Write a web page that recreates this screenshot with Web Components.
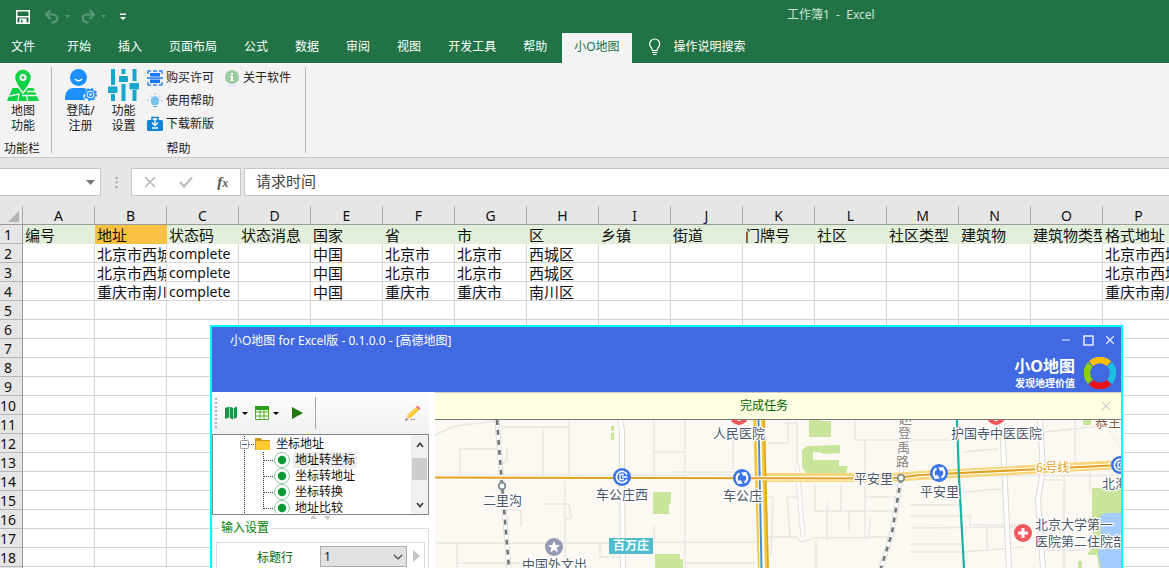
<!DOCTYPE html>
<html lang="zh-CN">
<head>
<meta charset="utf-8">
<title>工作簿1 - Excel</title>
<style>
html,body{height:100%;margin:0}
body{font:12px/16px "Noto Sans","Noto Sans CJK SC",sans-serif;color:#262626;overflow:hidden}
</style>
</head>
<body>
<xl-app></xl-app>

<template id="t-app">
<style>
:host{display:flex;flex-direction:column;height:100vh;position:relative;overflow:hidden;background:#e6e6e6}
xl-sheet{flex:1;min-height:0}
map-window{position:absolute;left:210px;right:46px;top:325px;bottom:0}
</style>
<xl-title></xl-title>
<xl-tabs></xl-tabs>
<xl-ribbon></xl-ribbon>
<xl-formula></xl-formula>
<xl-sheet></xl-sheet>
<map-window></map-window>
</template>

<template id="t-title">
<style>
:host{display:flex;align-items:center;height:33px;background:#217346;color:#cfe2d7;padding:0 12px}
.quick,.name{flex:1}
.quick{display:flex;align-items:center;height:100%}
button{border:0;background:none;padding:0;display:flex;color:#fff}
.undo{margin-left:10px}.redo{margin-left:10px}.more{margin-left:12px}
.dim{color:#589775}
.name{white-space:pre;padding:0 0 4px 405px}
</style>
<div class="quick">
<button aria-label="保存"><svg width="22" height="16" viewBox="0 0 22 16"><path d="M4 1h14v14H4zM5.500 2.500v4.500h11V2.500zM5.500 8.500v5h2v-4h7v4h2v-5zM9 11v2.500h1.500V11z" fill="#fff" fill-rule="evenodd"/></svg></button>
<button class="undo dim" aria-label="撤消"><svg width="26" height="16" viewBox="0 0 26 16"><path d="M6.500 1 2 5.500l4.500 4.500M2.500 5.500h6c7 0 6 8-1 8" fill="none" stroke="currentColor" stroke-width="2.200"/><path d="M21 6h5l-2.500 3z" fill="currentColor"/></svg></button>
<button class="redo dim" aria-label="恢复"><svg width="26" height="16" viewBox="0 0 26 16"><path d="M9.500 1 14 5.500 9.500 10M13.500 5.500h-6c-7 0-6 8 1 8" fill="none" stroke="currentColor" stroke-width="2.200"/><path d="M21 6h5l-2.500 3z" fill="currentColor"/></svg></button>
<button class="more" aria-label="自定义快速访问工具栏"><svg width="10" height="16" viewBox="0 0 10 16"><path d="M2 4.500h6v1.500H2zM2 8h6l-3 3z" fill="#fff"/></svg></button>
</div>
<div class="name">工作簿1  -  Excel</div>
</template>

<template id="t-tabs">
<style>
:host{display:block;background:#217346}
nav{display:flex;gap:3px;height:30px}
button{font:inherit;color:#fff;background:none;border:0;padding:0 12px 2px;white-space:nowrap;line-height:16px}
.file{padding:0 17px 2px 11px}
.on{background:#f3f3f3;color:#217346}
.tell{display:flex;align-items:center;gap:12px}
</style>
<nav>
<button class="file">文件</button><button>开始</button><button>插入</button><button>页面布局</button><button>公式</button><button>数据</button><button>审阅</button><button>视图</button><button>开发工具</button><button>帮助</button><button class="on">小O地图</button>
<button class="tell"><svg width="15" height="18" viewBox="0 0 15 18"><path d="M5.500 12.500c0-2.500-2.800-3.300-2.800-6.500a5 5 0 0 1 10 0c0 3.200-2.700 4-2.700 6.500z" fill="none" stroke="#fff" stroke-width="1.200"/><path d="M5 14h5.500v1H5zM6 16h3.500v1H6z" fill="#fff"/></svg>操作说明搜索</button>
</nav>
</template>

<template id="t-big">
<style>
:host{display:block}
button{font:inherit;line-height:15px;color:inherit;background:none;border:0;padding:0;width:100%;display:flex;flex-direction:column;align-items:center;text-align:center}
.i{height:34px}
</style>
<button><span class="i"><slot name="icon"></slot></span><slot></slot></button>
</template>

<template id="t-small">
<style>
:host{display:block}
button{font:inherit;line-height:23px;color:inherit;background:none;border:0;padding:0;display:flex;align-items:center;gap:3px;white-space:nowrap}
slot[name]{display:flex}
</style>
<button><slot name="icon"></slot><slot></slot></button>
</template>

<template id="t-ribbon">
<style>
:host{display:flex;height:90px;padding-top:4px;background:#f3f3f3;border-bottom:1px solid #cacaca;color:#222}
section{height:86px;border-right:1px solid #b5b5b5;display:flex;flex-direction:column}
.one{width:51px}
.row{display:flex;height:72px}
.lab{line-height:20px;text-align:center;height:14px}
.one .lab{width:44px}
.two{width:253px}
ribbon-big{width:43px;padding-top:2px}
.one ribbon-big{width:46px}
.two ribbon-big:first-child{margin-left:7px}
.grid{display:grid;grid-template:repeat(3,23px)/77px auto;grid-auto-flow:column;margin:-1px 0 0 2px;height:69px}
svg{display:block}
</style>
<section class="one"><div class="row"><ribbon-big><svg slot="icon" width="32" height="32" viewBox="0 0 32 32"><path d="M5.500 19 0 32h32l-5.500-13H5.500z" fill="#0ed145"/><path d="M16 0a8.500 8.500 0 0 0-8.500 8.500C7.500 14 16 24 16 24s8.500-10 8.500-15.500A8.500 8.500 0 0 0 16 0z" fill="#0ed145" stroke="#f3f3f3" stroke-width="1.500"/><circle cx="16" cy="8.500" r="3.600" fill="#f3f3f3"/><circle cx="16" cy="8.500" r="1.400" fill="#0ed145"/><path d="M2.500 27 12 25l-1 7M15 26.500h15M19.500 26.500l1 5.500M20 22.500h8" fill="none" stroke="#f3f3f3" stroke-width="1.300"/></svg>地图<br>功能</ribbon-big></div><div class="lab">功能栏</div></section>
<section class="two"><div class="row">
<ribbon-big><svg slot="icon" width="32" height="32" viewBox="0 0 32 32"><circle cx="13.500" cy="8.500" r="8.500" fill="#1e8fff"/><path d="M10 10q3.500 3.500 7 0" stroke="#fff" stroke-width="1.300" fill="none"/><path d="M0 31v-3q1-9 9-9h9l4 1-4 7 2 4z" fill="#1e8fff"/><circle cx="25.500" cy="25.500" r="4.600" fill="#f3f3f3" stroke="#1e8fff" stroke-width="1.600"/><circle cx="25.500" cy="25.500" r="5.700" fill="none" stroke="#1e8fff" stroke-width="1.800" stroke-dasharray="2 2.480"/><circle cx="25.500" cy="25.500" r="2" fill="none" stroke="#1e8fff" stroke-width="1.500"/></svg>登陆/<br>注册</ribbon-big>
<ribbon-big><svg slot="icon" width="32" height="32" viewBox="0 0 32 32"><path d="M3 0h4v32H3zM13.500 0h4v32h-4zM24.500 0h4v32h-4z" fill="#17a7cd"/><path d="M0 16h10v9H0zM11 5h10v10H11zM21 12h10v9H21z" fill="#f3f3f3"/><rect x="0" y="17.500" width="9.500" height="6.500" rx="1" fill="#17a7cd"/><rect x="11" y="7" width="9" height="6" rx="1" fill="#17a7cd"/><rect x="21.500" y="14" width="9.500" height="6.500" rx="1" fill="#17a7cd"/></svg>功能<br>设置</ribbon-big>
<div class="grid">
<ribbon-small><svg slot="icon" width="16" height="16" viewBox="0 0 16 16"><path d="M1 4V1h3M12 1h3v3M1 12v3h3M12 15h3v-3M6 1h4M6 15h4" stroke="#3385f5" stroke-width="1.400" fill="none"/><path d="M3 3h10v3.500H3zM3 9.500h10V13H3z" fill="#1677ff"/><path d="M0 7.300h16v1.500H0z" fill="#1677ff"/></svg>购买许可</ribbon-small>
<ribbon-small><svg slot="icon" width="16" height="16" viewBox="0 0 16 16"><path d="M5.500 12Q3.500 9.500 3.800 7.500a4.200 4.200 0 0 1 8.400 0q.3 2-1.700 4.500z" fill="#7cc0ee"/><path d="M6 13h4v1H6z" fill="#5aaee6"/><path d="M8 0v2M2.500 2.500l1.400 1.400M13.500 2.500l-1.400 1.400M0 7.500h2M14 7.500h2" stroke="#9fcff2" stroke-width="1.200"/></svg>使用帮助</ribbon-small>
<ribbon-small><svg slot="icon" width="16" height="16" viewBox="0 0 16 16"><rect x="0" y="4" width="16" height="11" rx="1.500" fill="#0c86d4"/><path d="M5 4V1.500h6V4" stroke="#0c86d4" stroke-width="1.500" fill="none"/><path d="M8 2v7M5 6.500 8 9.500l3-3M5 12h6" stroke="#fff" stroke-width="1.300" fill="none"/></svg>下载新版</ribbon-small>
<ribbon-small><svg slot="icon" width="16" height="16" viewBox="0 0 16 16"><circle cx="8" cy="7" r="7" fill="#9dcc9f"/><path d="M7 3h2v2H7zM6 6h3v4h1v1H6v-1h1V7H6z" fill="#fff"/><path d="M3 15.300h10" stroke="#cfe0ff"/></svg>关于软件</ribbon-small>
</div></div><div class="lab">帮助</div></section>
</template>

<template id="t-formula">
<style>
:host{display:flex;padding:10px 0 10px;height:28px;background:#e6e6e6}
.box,input{box-sizing:border-box;height:28px;border:1px solid #c6c6c6;background:#fff}
.name{width:101px;border-left:0;display:flex;align-items:center;justify-content:flex-end;padding:0 5px}
.dots{width:30px;display:flex;align-items:center;justify-content:center}
.acts{width:110px;display:flex;align-items:center;justify-content:space-around}
.acts button{border:0;background:none;padding:0;display:flex;color:#555;font:italic bold 15px/20px "Liberation Serif",serif}
small{font-size:12px;padding-top:1px}
input{flex:1;margin-left:3px;border-right:0;padding:0 0 4px 11px;font:15px/20px "Noto Sans CJK SC",sans-serif;color:#444;outline:0;min-width:0}
</style>
<div class="box name"><svg width="9" height="5" viewBox="0 0 9 5"><path d="M0 0h9L4.500 5z" fill="#777"/></svg></div>
<div class="dots"><svg width="3" height="13" viewBox="0 0 3 13"><path d="M.500 1h2v2h-2zM.500 5.500h2v2h-2zM.500 10h2v2h-2z" fill="#a0a0a0"/></svg></div>
<div class="box acts">
<button aria-label="取消"><svg width="12" height="12" viewBox="0 0 12 12"><path d="m1 1 10 10M11 1 1 11" stroke="#b9b9b9" stroke-width="1.600"/></svg></button>
<button aria-label="输入"><svg width="14" height="12" viewBox="0 0 14 12"><path d="m1 6 4 4.500L13 1.500" stroke="#bcbcbc" stroke-width="2.200" fill="none"/></svg></button>
<button aria-label="插入函数">f<small>x</small></button></div>
<input aria-label="编辑栏" value="请求时间">
</template>

<template id="t-sheet">
<style>
:host{display:block;overflow:hidden;background:#fff}
table{border-collapse:separate;border-spacing:0;table-layout:fixed;width:1175px;font:15px/16px "Noto Sans CJK SC",sans-serif;color:#111}
col{width:72px}col.h{width:23px}
th,td{box-sizing:border-box;height:19px;padding:2px 0 0 2px;border-right:1px solid #d4d4d4;border-bottom:1px solid #d4d4d4;white-space:nowrap;text-align:left;font-weight:400}
td{overflow:clip visible}
td:empty{padding:0}
th,.latin{font-family:"Noto Sans",sans-serif;font-size:14px}
thead th{background:#e6e6e6;text-align:center;padding:2px 0 0;border-right-color:#aaa;border-bottom-color:#9b9b9b}
tbody th{background:#e6e6e6;text-align:center;padding:2px 6px 0 0;border-right-color:#9b9b9b;border-bottom-color:#b5b5b5}
.head td{background:#e2efda;border-color:#e2efda}
.head td.on{background:#f7c244;border-color:#f7c244}
thead svg{display:block;margin-left:8px}
</style>
<table><colgroup></colgroup><thead></thead><tbody></tbody></table>
</template>

<template id="t-window">
<style>
:host{display:flex;flex-direction:column;box-sizing:border-box;border:2px solid #00ffff;border-bottom:0;background:#fff;overflow:hidden}
header{background:#4169e1;color:#fff;height:65px;flex:none;display:flex;justify-content:space-between}
h1{margin:6px 0 0 18px;font-size:12px;line-height:16px;font-weight:400;white-space:nowrap}
.r{display:flex;flex-direction:column;align-items:flex-end;padding:6px 5px 0 0}
.ctl{display:flex;gap:10px}
.ctl button,.close{border:0;background:none;padding:0;width:12px;height:14px;display:flex;align-items:center;justify-content:center}
.brand{display:flex;align-items:center;gap:9px;margin-top:9px}
.brand div{text-align:right}
b{display:block;font-size:16px;line-height:20px}
i{display:block;font-size:10px;line-height:14px;font-style:normal;font-weight:700}
main{display:flex;flex:1;min-height:0}
.left{width:217px;margin-right:6px;flex:none;overflow:hidden}
.right{flex:1;min-width:0;display:flex;flex-direction:column}
.note{height:26px;flex:none;background:#ffffe1;border-top:1px solid #ccc;border-bottom:1px solid #777;color:#006400;display:flex;align-items:center;line-height:26px}
.note span{flex:1;text-align:center;padding-right:7px}
.note .close{margin-right:9px}
map-canvas{flex:1;min-height:0}
</style>
<header><h1>小O地图 for Excel版 - 0.1.0.0 - [高德地图]</h1>
<div class="r"><div class="ctl">
<button aria-label="最小化"><svg width="8" height="2"><path d="M0 1h8" stroke="#b5c4f3" stroke-width="1.500"/></svg></button>
<button aria-label="最大化"><svg width="11" height="11"><rect x="1" y="1" width="9" height="9" fill="none" stroke="#fff" stroke-width="1.300"/></svg></button>
<button aria-label="关闭"><svg width="8" height="8"><path d="m0 0 8 8M8 0 0 8" stroke="#e2e8fb" stroke-width="1.300"/></svg></button></div>
<div class="brand"><div><b>小O地图</b><i>发现地理价值</i></div>
<svg width="32" height="32" viewBox="-16 -16 32 32" fill="none" stroke-width="6.500"><path d="M-9 -9.400A13 13 0 0 1 9 -9.400" stroke="#ffc000"/><path d="M9.700 -8.700A13 13 0 0 1 9.700 8.700" stroke="#1cbfdf"/><path d="M9 9.400A13 13 0 0 1-9 9.400" stroke="#e81416"/><path d="M-9.700 8.700A13 13 0 0 1-9.700 -8.700" stroke="#8fd000"/></svg></div></div></header>
<main><div class="left"><map-tools></map-tools><map-tree></map-tree><map-input></map-input></div>
<div class="right"><div class="note"><span>完成任务</span><button class="close" aria-label="关闭提示"><svg width="10" height="10"><path d="m1 1 8 8M9 1 1 9" stroke="#d0d0cc" stroke-width="1.200"/></svg></button></div><map-canvas></map-canvas></div></main>
</template>

<template id="t-tools">
<style>
:host{display:flex;align-items:center;height:42px;background:linear-gradient(#fdfdfd,#f0f0f0);padding:0 7px 0 3px}
button{border:0;background:none;padding:0;display:flex;align-items:center}
.m{margin-left:8px}.t{margin-left:7px}.p{margin-left:13px}
hr{width:1px;height:32px;border:0;background:#a8a8a8;margin:0 auto 0 12px}
</style>
<svg width="2" height="32"><path d="M1 1v31" stroke="#b0b0b0" stroke-width="2" stroke-dasharray="2 2"/></svg>
<button class="m" aria-label="地图"><svg width="23" height="14" viewBox="0 0 23 14"><path d="m0 2 4-1.500v11L0 13zM4.700.500 8 2v11.500l-3.300-1.500zM8.700 2 12 .500v11l-3.300 1.500z" fill="#17964a"/><path d="M17 6h6l-3 3z"/></svg></button>
<button class="t" aria-label="表格"><svg width="24" height="14" viewBox="0 0 24 14"><path d="M.500.500h13v13H.500zM1 6h12M1 10h12M5 4v9M9 4v9" fill="#fff" stroke="#4caf26"/><path d="M0 0h14v4H0z" fill="#2c9f1f"/><path d="M18 6h6l-3 3z"/></svg></button>
<button class="p" aria-label="运行"><svg width="11" height="12"><path d="M0 0 11 6 0 12z" fill="#1f7a10"/></svg></button>
<hr>
<button aria-label="清除"><svg width="17" height="16" viewBox="0 0 17 16"><path d="M2 10.500 11 2l3 3-9 8.500z" fill="#ffc928"/><path d="m3 11.500 9-8.500" stroke="#ffe68a"/><path d="m11 2 1.500-1.500 3 3L14 5z" fill="#ef6e7b"/><path d="m2 10.500-1.500 5 4.500-2z" fill="#f3d7a8"/><path d="m.500 15.500 1-2 1 1zM6 14.500h5" fill="#444" stroke="#777" stroke-dasharray="1.500 1"/></svg></button>
</template>

<template id="t-tree">
<style>
:host{display:flex;height:79px;border:1px solid #828790;background:#fff;overflow:hidden;color:#111}
ul{list-style:none;margin:0;padding:1px 0 0;flex:1;height:77px;overflow:hidden}
ul ul{height:auto;padding:0}
li>div{display:flex;align-items:center;height:16px;line-height:16px;white-space:nowrap}
svg{flex:none}
span{padding:0 2px}
.on span{background:#ececec}
.bar{width:17px;background:#f0f0f0;display:flex;flex-direction:column;align-items:center;flex:none;height:79px}
.bar svg{margin:7px 0 10px}
.bar b{width:15px;height:22px;background:#cdcdcd;display:block}
.bar svg:last-child{margin:22px 0 0}
</style>
<ul role="tree"><li role="treeitem"><div><svg width="61" height="16" viewBox="0 0 61 16"><path d="M31.500 0v16M36 8.500h7" stroke="#333" stroke-dasharray="1 1"/><rect x="27.500" y="4.500" width="8" height="8" rx="1" fill="#fff" stroke="#999"/><path d="M29 8.500h5" stroke="#3b5ba5"/><path d="M42 2h6l1 2h8v10H42z" fill="#c99a1b"/><path d="M43 5h14v9H43z" fill="#ffc933"/></svg><span>坐标地址</span></div>
<ul role="group"></ul></li></ul>
<div class="bar" aria-hidden="true"><svg width="8" height="6"><path d="m1 5 3-3.500L7 5" fill="none" stroke="#444" stroke-width="1.800"/></svg><b></b><svg width="8" height="6"><path d="m1 1 3 3.500L7 1" fill="none" stroke="#444" stroke-width="1.800"/></svg></div>
</template>

<template id="t-input">
<style>
:host{display:block}
.grip{display:block;margin:0 auto}
fieldset{margin:0;border:1px solid #dcdcdc;padding:6px 3px 0 3px;min-width:0}
legend{color:#008000;padding:0 2px;margin-left:3px;line-height:16px}
.in{border:1px solid #dcdcdc;height:60px;padding:3px 3px 0 40px;display:flex;align-items:flex-start;line-height:24px;color:#006400}
.s{position:relative;margin-left:27px}
select{appearance:none;width:87px;height:21px;box-sizing:border-box;border:1px solid #adadad;background:#e1e1e1;border-radius:0;font:inherit;line-height:18px;padding:0 3px;color:#222;display:block}
.s svg{position:absolute;right:4px;top:8px;pointer-events:none}
.n{margin:4px 0 0 6px}
</style>
<svg class="grip" width="22" height="5"><path d="M0 4h7L3.500 0zM14 1h7l-3.500 4z" fill="#c9c9c9"/></svg>
<fieldset><legend>输入设置</legend><div class="in"><label for="row">标题行</label><div class="s"><select id="row"><option>1</option><option>2</option></select><svg width="10" height="6"><path d="m1 1 4 4 4-4" fill="none" stroke="#444" stroke-width="1.200"/></svg></div><svg class="n" width="7" height="12"><path d="M0 0 7 6 0 12z" fill="#c4c4c4"/></svg></div></fieldset>
</template>

<template id="t-canvas">
<style>
:host{display:block;background:#fcf9f2;overflow:hidden}
svg{display:block;width:100%;height:100%}
text{font:13px "Noto Sans CJK SC",sans-serif;fill:#4d5967;stroke:#fff;stroke-width:2.500px;paint-order:stroke;stroke-linejoin:round}
.way text{fill:#8b8078}
.line{font-size:12px;fill:#dfa01c}
.area{font-size:12px;font-weight:700;fill:#fff;stroke:none}
.brown{fill:#8a5a3a}
</style>
<svg viewBox="0 0 686 148" preserveAspectRatio="xMinYMin slice" role="img" aria-label="高德地图">
<defs>
<g id="loop"><circle r="9" fill="#3b74e7"/><path d="M-2.500-4.500A5.200 5.200 0 0 0-2 5M2.500 4.500A5.200 5.200 0 0 0 2-5" fill="none" stroke="#fff" stroke-width="2"/><path d="M-5 6 1 5.500-2 1.500zM5-6l-6 .5 3 4z" fill="#fff"/></g>
<g id="metro"><circle r="9" fill="#3b74e7"/><path d="M5-2.500A5.600 5.600 0 1 0 5 2.500M5.500 0H0" fill="none" stroke="#fff" stroke-width="1.700"/><path d="M2-2.500H-2v5H2" fill="none" stroke="#fff" stroke-width="1.300"/></g>
<g id="cross"><circle r="9" fill="#f0595c"/><path d="M-5 0H5M0-5V5" stroke="#fff" stroke-width="3"/></g>
</defs>
<g fill="#c9e59b"><path d="M218 72h18v11l-2 1v10h-16zM220 134h25v5h3v9h-28zM176 6h3v5h-3zM176 13h3v7h-3zM374 0h5l3-4 4 5h10v16h-22zM372 26l33-1v8l-16 1-5-2h-6v8h26v6h9l-2 7h-40l-4-6V30zM657 68h29v80h-22l-2-13h-10l7-10-2-20zM643 141h4v7h-4zM648 0h8v5h-8z"/></g>
<path d="M665 96l6-3h15v55h-20l-3-14 3-18z" fill="#a5ccff"/>
<g fill="none" stroke="#e9e7e3" stroke-width="1.500">
<path d="M0 15 20 6 62 1M66 7h68M108 7v49M134 0v56M25 56V29h39M72 27v13l-5 4M130 61v38M110 84h24l2 14-6 2v48M69 90h17v16M0 123h187M22 123v25M22 143h112M165 123v14h23M219 0v55M219 32h30M236 52h75M250 0v148M219 106v17M188 122h135M250 143h70M298 0v50M353 0v23h-20M348 3h14v50M333 117h28l5 5 14-4h54l1-20M380 64v27h85M392 82v38M406 64v27M414 91v20M420 0v20h53M430 20v97h24M430 77h36M333 77h5l-2 60M362 77h-10l3 40M381 120v28"/>
<path d="M528 32l35-3M528 72l38-3M475 20h48M475 85h52M528 96h7v9h55M475 108l114-1M552 106v25M528 132l60-5M475 124h52M475 96h53M640 0v42M610 12l76-8M629 50v98M608 60h20M655 48v25M610 130h40M475 132h52"/></g>
<g fill="none"><path d="M185 0l2 10V57l1 91M567 0l7 148M605 0l3 50-5 30 5 68" stroke="#ddd9d4" stroke-width="6"/><path d="M185 0l2 10V57l1 91M567 0l7 148M605 0l3 50-5 30 5 68" stroke="#fff" stroke-width="4"/>
<path d="M362 45 368 117" stroke="#e6e3df" stroke-width="5"/><path d="M362 45 368 117" stroke="#fff" stroke-width="3"/>
<path d="M672 8l14 20" stroke="#ddd" stroke-dasharray="2 2"/>
<path d="M62 0 67 65 74 148M471 0 466 58 457 113 446 148" stroke="#d8d4ce" stroke-width="5"/>
<path d="M62 0 67 65 74 148M471 0 466 58 457 113 446 148" stroke="#fff" stroke-width="3.500"/>
<path d="M62 0 67 65 74 148M466 58 457 113 446 148" stroke="#6e7374" stroke-width="2.500" stroke-dasharray="5 5"/>
<path d="M0 55.500h686" stroke="#e4e2df" stroke-width="2" opacity=".7"/>
<path d="M327 54.500h130l28-2 201-11M327 60.500h130l28-2 201-11" stroke="#f8d77c" stroke-width="3"/>
<path d="M320 0l5 148M328 0l4 148" stroke="#f3c63f" stroke-width="4"/><path d="M329 0l4 148" stroke="#dea71c" stroke-width="1.500"/>
<path d="M323.500 0l3 148" stroke="#fff" stroke-width="4"/><path d="M323.500 0l3 148" stroke="#4a8fd8" stroke-width="2"/>
<path d="M0 57.500 457 58.500 485 55 686 45" stroke="#fff" stroke-width="4"/><path d="M0 57.500 457 58.500 485 55 686 45" stroke="#e2a01c" stroke-width="2"/>
<path d="M522 0l2 58 5 90" stroke="#16b3a6" stroke-width="2.200"/></g>
<g fill="#fff" stroke="#788c92" stroke-width="1.800"><circle cx="67" cy="66" r="3.300"/><circle cx="466" cy="58" r="3.300"/></g>
<use href="#metro" x="187" y="57"/><use href="#loop" x="307" y="58"/><use href="#loop" x="504" y="53"/><use href="#metro" x="685" y="45"/>
<use href="#cross" x="304" y="-4"/><use href="#cross" x="561" y="-4"/><use href="#cross" x="588" y="113"/>
<circle cx="119" cy="127" r="9" fill="#939bb4"/><path d="m119 121 1.800 4 4.200.3-3.300 2.800 1.100 4.200-3.800-2.300-3.800 2.300 1.100-4.200-3.300-2.800 4.200-.3z" fill="#fff"/>
<rect x="174" y="118" width="44" height="16" fill="#50bdcf"/><text class="area" x="178" y="130">百万庄</text>
<text x="48" y="85">二里沟</text><text x="161" y="79">车公庄西</text><text x="278" y="18">人民医院</text><text x="288" y="80">车公庄</text><text x="419" y="63">平安里</text><text x="485" y="76">平安里</text><text x="516" y="18">护国寺中医医院</text><text class="brown" x="660" y="7">恭王</text><text class="line" x="601" y="52">6 号线</text><text x="667" y="68">北海</text><text x="600" y="109">北京大学第一</text><text x="600" y="126">医院第二住院部</text><text x="87" y="149">中国外文出</text>
<g class="way"><text x="464" y="3">赵</text><text x="463" y="17">登</text><text x="462" y="32">禹</text><text x="461" y="46">路</text></g>
</svg>
</template>

<script>
const define = (tag, id, setup) => customElements.define(tag, class extends HTMLElement {
  constructor() {
    super();
    this.attachShadow({mode: "open"}).append(document.getElementById(id).content.cloneNode(true));
    if (setup) setup(this.shadowRoot);
  }
});

define("ribbon-big", "t-big");
define("ribbon-small", "t-small");
define("xl-title", "t-title");
define("xl-tabs", "t-tabs");
define("xl-ribbon", "t-ribbon");
define("xl-formula", "t-formula");

define("xl-sheet", "t-sheet", root => {
  const letters = "ABCDEFGHIJKLMNOP";
  const record = (addr, city, area) => ["", addr, "complete", "", "中国", city, city, area, "", "", "", "", "", "", "", addr];
  const rows = [
    ["编号","地址","状态码","状态消息","国家","省","市","区","乡镇","街道","门牌号","社区","社区类型","建筑物","建筑物类型","格式地址"],
    record("北京市西城", "北京市", "西城区"),
    record("北京市西城", "北京市", "西城区"),
    record("重庆市南川", "重庆市", "南川区")
  ];
  root.querySelector("colgroup").innerHTML = '<col class="h">' + "<col>".repeat(16);
  root.querySelector("thead").innerHTML = '<tr><th aria-label="全选"><svg width="11" height="11"><path d="M11 0v11H0z" fill="#b3b3b3"/></svg></th>' +
    [...letters].map(c => `<th scope="col">${c}</th>`).join("") + "</tr>";
  let body = "";
  for (let r = 0; r < 19; r++) {
    body += `<tr${r ? "" : ' class="head"'}><th scope="row">${r + 1}</th>`;
    for (let c = 0; c < 16; c++) {
      const cls = !r && c === 1 ? "on" : r && c === 2 ? "latin" : "";
      body += `<td class="${cls}">${rows[r]?.[c] ?? ""}</td>`;
    }
    body += "</tr>";
  }
  root.querySelector("tbody").innerHTML = body;
});

define("map-tools", "t-tools");
define("map-tree", "t-tree", root => {
  root.querySelector("ul ul").innerHTML = ["地址转坐标", "坐标转地址", "坐标转换", "地址比较"].map((name, i) =>
    `<li role="treeitem"${i ? "" : ' class="on"'}><div><svg width="80" height="16" viewBox="0 0 80 16"><path d="M31.5 0v16M50.5 0v${i < 3 ? 16 : 9}M51 8.5h10" stroke="#333" stroke-dasharray="1 1"/><circle cx="69" cy="8" r="7.500" fill="#fff" stroke="#8fc79b"/><circle cx="69" cy="8" r="4.200" fill="#0a9a35"/></svg><span>${name}</span></div></li>`).join("");
});
define("map-input", "t-input");
define("map-canvas", "t-canvas");
define("map-window", "t-window");
define("xl-app", "t-app");
</script>
</body>
</html>
